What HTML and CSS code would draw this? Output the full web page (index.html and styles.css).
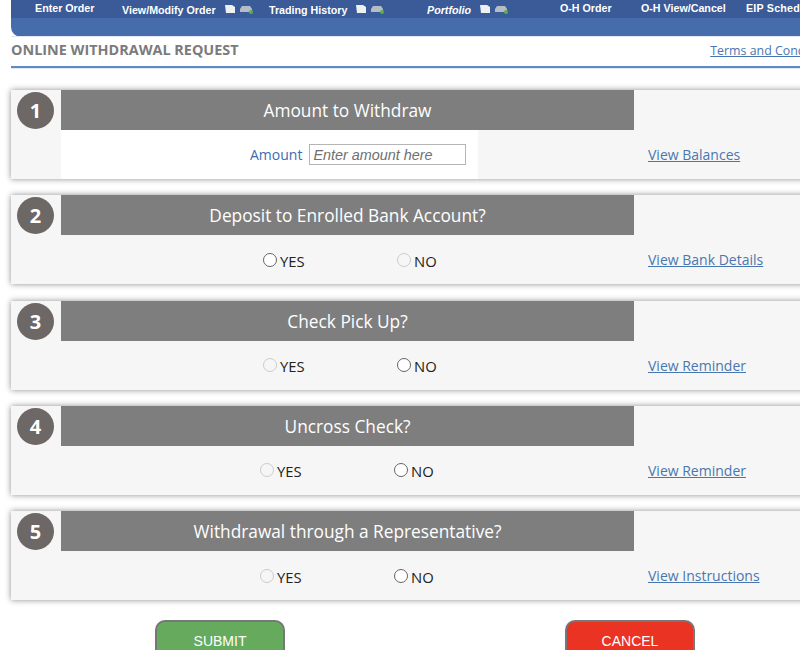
FILE: index.html
```html
<!DOCTYPE html>
<html lang="en">
<head>
<meta charset="utf-8">
<title>Online Withdrawal Request</title>
<link rel="stylesheet" href="styles.css">
</head>
<body>
<div class="page">
  <nav class="nav">
    <div class="nav-top">
      <a class="nav-item up w-enter">Enter Order</a>
      <div class="nav-item w-view"><a>View/Modify Order</a>
        <svg class="ico" viewBox="0 0 29 10"><path class="doc" d="M0 1h7l3 2v6H1z"/><path class="tray" d="M15 5l2-3h8l2 3v3H15z"/><circle class="dot" cx="26" cy="8" r="2"/></svg></div>
      <div class="nav-item w-hist"><a>Trading History</a>
        <svg class="ico" viewBox="0 0 29 10"><path class="doc" d="M0 1h7l3 2v6H1z"/><path class="tray" d="M15 5l2-3h8l2 3v3H15z"/><circle class="dot" cx="26" cy="8" r="2"/></svg></div>
      <div class="nav-item w-port"><a class="ital">Portfolio</a>
        <svg class="ico" viewBox="0 0 29 10"><path class="doc" d="M0 1h7l3 2v6H1z"/><path class="tray" d="M15 5l2-3h8l2 3v3H15z"/><circle class="dot" cx="26" cy="8" r="2"/></svg></div>
      <a class="nav-item up w-oh">O-H Order</a>
      <a class="nav-item up w-ohv">O-H View/Cancel</a>
      <a class="nav-item up w-eip">EIP Schedule</a>
    </div>
    <div class="nav-bottom"></div>
  </nav>

  <header class="title-row">
    <h1>ONLINE WITHDRAWAL REQUEST</h1>
    <a class="terms" href="#">Terms and Conditions</a>
  </header>

  <main class="steps">
    <section class="card">
      <div class="num"><span>1</span></div>
      <h2>Amount to Withdraw</h2>
      <div class="side"></div>
      <div class="spacer"></div>
      <div class="body amount">
        <label for="amt">Amount</label>
        <input id="amt" type="text" placeholder="Enter amount here">
      </div>
      <div class="side link-cell"><a href="#">View Balances</a></div>
    </section>

    <section class="card">
      <div class="num"><span>2</span></div>
      <h2>Deposit to Enrolled Bank Account?</h2>
      <div class="side"></div>
      <div class="spacer"></div>
      <div class="body opts">
        <label class="opt"><input type="radio" name="q2">YES</label>
        <label class="opt"><input type="radio" name="q2" disabled>NO</label>
      </div>
      <div class="side link-cell"><a href="#">View Bank Details</a></div>
    </section>

    <section class="card">
      <div class="num"><span>3</span></div>
      <h2>Check Pick Up?</h2>
      <div class="side"></div>
      <div class="spacer"></div>
      <div class="body opts">
        <label class="opt"><input type="radio" name="q3" disabled>YES</label>
        <label class="opt"><input type="radio" name="q3">NO</label>
      </div>
      <div class="side link-cell"><a href="#">View Reminder</a></div>
    </section>

    <section class="card">
      <div class="num"><span>4</span></div>
      <h2>Uncross Check?</h2>
      <div class="side"></div>
      <div class="spacer"></div>
      <div class="body opts shift">
        <label class="opt"><input type="radio" name="q4" disabled>YES</label>
        <label class="opt"><input type="radio" name="q4">NO</label>
      </div>
      <div class="side link-cell"><a href="#">View Reminder</a></div>
    </section>

    <section class="card">
      <div class="num"><span>5</span></div>
      <h2>Withdrawal through a Representative?</h2>
      <div class="side"></div>
      <div class="spacer"></div>
      <div class="body opts shift">
        <label class="opt"><input type="radio" name="q5" disabled>YES</label>
        <label class="opt"><input type="radio" name="q5">NO</label>
      </div>
      <div class="side link-cell"><a href="#">View Instructions</a></div>
    </section>
  </main>

  <div class="actions">
    <button class="btn submit" type="button">SUBMIT</button>
    <button class="btn cancel" type="button">CANCEL</button>
  </div>
</div>
</body>
</html>
```
FILE: styles.css
```css
* { box-sizing: border-box; }
html, body { margin: 0; padding: 0; height: 650px; overflow: hidden; background: #fff; }
.page { width: 1000px; padding-left: 11px; font-family: "Open Sans", sans-serif; }

.nav { height: 37px; border-radius: 0 0 0 10px; overflow: hidden; background: #466cab; }
.nav-top { height: 18px; background: #3a5a98; display: flex; color: #fff; font: bold 10.7px/1 "Liberation Sans", sans-serif; }
.nav-item { display: flex; align-items: flex-start; padding-top: 5px; white-space: nowrap; }
.nav-item.up { padding-top: 3px; }
.w-enter { width: 111px; padding-left: 24px; }
.w-view { width: 147px; }
.w-hist { width: 158px; }
.w-port { width: 133px; }
.w-oh { width: 81px; }
.w-ohv { width: 105px; }
.w-eip { width: 100px; letter-spacing: .2px; }
.ital { font-style: italic; }
.ico { width: 29px; height: 10px; margin-left: 9px; margin-top: -1px; flex: none; }
.doc { fill: #eef0f2; }
.tray { fill: #b4bcc6; }
.dot { fill: #5cb04c; }

.title-row { height: 31px; border-bottom: 2px solid #5f8ac6; display: flex; justify-content: space-between; align-items: center; padding-bottom: 2px; box-shadow: 0 1px 0 #dfe8f4, 0 -1px 0 #dfe8f4; }
.title-row h1 { margin: 0; font-size: 14.4px; font-weight: 700; color: #7b7b7b; line-height: 1; }
.terms { font-size: 12.4px; color: #4a76b0; white-space: nowrap; margin-right: 163px; }

.steps { display: flex; flex-direction: column; gap: 16.25px; margin-top: 22px; }
.card { height: 89px; width: 989px; display: grid; grid-template-columns: 50px 573px 1fr; grid-template-rows: 40px 49px; background: #f6f6f6; box-shadow: 0 0 6px rgba(0,0,0,.45); }
.num { padding: 2px 0 0 6px; }
.num span { display: flex; align-items: center; justify-content: center; width: 37px; height: 37px; border-radius: 50%; background: #6d6765; color: #fff; font-size: 20px; font-weight: 700; }
.card h2 { margin: 0; padding-top: 2px; background: #7e7e7e; color: #fff; font-size: 17.3px; font-weight: 400; line-height: 38px; text-align: center; }
.body { font-size: 14.8px; }
.link-cell { padding: 15px 0 0 14px; font-size: 14px; line-height: 20px; }
.link-cell a { color: #4a76b0; }

.amount { width: 417px; background: #fff; display: flex; align-items: center; gap: 7px; padding: 0 0 0 189px; font-size: 14px; }
.amount label { color: #3f6cb0; white-space: nowrap; }
.amount input { width: 157px; height: 21px; flex: none; border: 1px solid #b5b5b5; padding: 0 3px; background: #fff; font: italic 14.4px "Liberation Sans", sans-serif; }
.amount input::placeholder { color: #6f6f6f; opacity: 1; }

.opts { display: flex; padding: 15.5px 0 0 202px; color: #222; }
.opts.shift { padding-left: 199px; }
.opt { width: 134px; display: flex; align-items: flex-start; line-height: 20px; }
.opt input { appearance: none; margin: 2px 3px 0 0; width: 14px; height: 14px; border-radius: 50%; border: 1px solid #666; background: #fff; flex: none; }
.opt input:disabled { border-color: #ccc; background: #f6f6f6; }

.actions { display: flex; padding-left: 144px; gap: 280px; margin-top: 20px; }
.btn { width: 130px; height: 44px; border: 2px solid #777; border-radius: 10px; color: #fff; font: 14px "Liberation Sans", sans-serif; padding: 0 0 2px; }
.submit { background: #66ab5d; }
.cancel { background: #eb3323; }
```
